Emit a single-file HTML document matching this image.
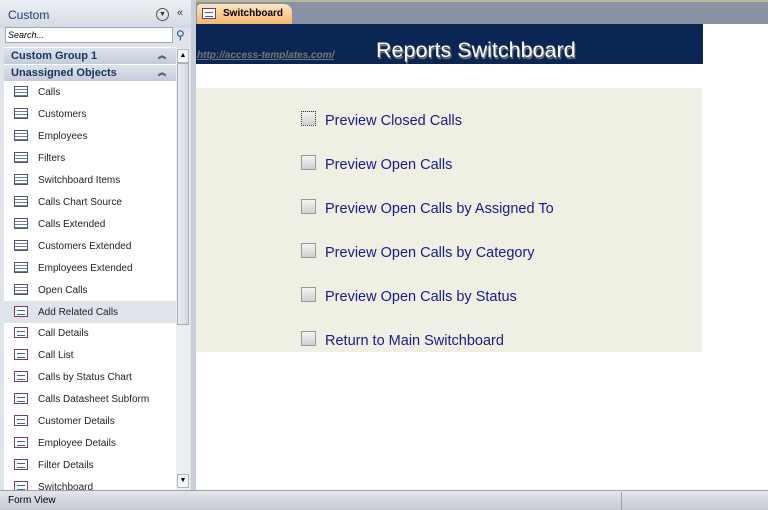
<!DOCTYPE html>
<html><head><style>
body{margin:0;width:768px;height:510px;overflow:hidden;position:relative;font-family:"Liberation Sans",sans-serif;background:#fff}
.abs{position:absolute}
#nav{left:0;top:0;width:191px;height:490px;background:#dfe3ea;border-right:1px solid #9aa3b0}
.hdr{left:0;top:0;width:191px;height:28px;background:linear-gradient(#eef1f5,#d3d9e2);}
.grp{left:4px;width:172px;height:16px;background:linear-gradient(#dde3ec,#c3ccd9);font-size:11px;font-weight:bold;color:#1c2f5e;line-height:16px;padding-left:7px;box-sizing:border-box}
.item{left:4px;width:172px;height:22px;font-size:10px;color:#222;line-height:24px;padding-left:34px;box-sizing:border-box}
.ic{position:absolute;left:10px;top:5px;width:14px;height:11px;border:1px solid #556;box-sizing:border-box;background:repeating-linear-gradient(#fff 0 2px,#6a7fa8 2px 3px)}
.fm{background:#fff;border-color:#7a3a6a}
.fm::after{content:"";position:absolute;left:2px;top:3px;width:8px;height:3px;border-top:1px solid #36a;border-bottom:1px solid #36a}
.btn{left:301px;width:15px;height:15px;background:linear-gradient(#f4f4f4,#d0d0d0);border:1px solid #999;box-sizing:border-box}
.bt{left:325px;font-size:14.5px;color:#1a1a8c;margin-top:2px}
</style></head><body>
<div id="nav" class="abs">
<div class="abs hdr"></div>
<div class="abs" style="left:8px;top:8px;font-size:12px;color:#1e3a6e">Custom</div>
<div class="abs" style="left:156px;top:8px;width:11px;height:11px;border:1px solid #555;border-radius:50%;font-size:7px;text-align:center;line-height:11px;color:#333">▼</div>
<div class="abs" style="left:177px;top:7px;font-size:11px;color:#333">«</div>
<div class="abs" style="left:5px;top:27px;width:168px;height:16px;background:#fff;border:1px solid #a0a8b5;box-sizing:border-box;font-size:9px;font-style:italic;line-height:14px;padding-left:2px">Search...</div>
<div class="abs" style="left:176px;top:28px;font-size:12px;color:#1a4f9a">⚲</div>
<div class="abs" style="left:4px;top:47px;width:172px;height:443px;background:#fff"></div>
<div class="abs grp" style="top:48px">Custom Group 1<span style="position:absolute;right:10px;font-size:8px">︽</span></div>
<div class="abs grp" style="top:65px">Unassigned Objects<span style="position:absolute;right:10px;font-size:8px">︽</span></div>
<div class="abs item" style="top:81px"><i class="ic"></i>Calls</div>
<div class="abs item" style="top:103px"><i class="ic"></i>Customers</div>
<div class="abs item" style="top:125px"><i class="ic"></i>Employees</div>
<div class="abs item" style="top:147px"><i class="ic"></i>Filters</div>
<div class="abs item" style="top:169px"><i class="ic"></i>Switchboard Items</div>
<div class="abs item" style="top:191px"><i class="ic"></i>Calls Chart Source</div>
<div class="abs item" style="top:213px"><i class="ic"></i>Calls Extended</div>
<div class="abs item" style="top:235px"><i class="ic"></i>Customers Extended</div>
<div class="abs item" style="top:257px"><i class="ic"></i>Employees Extended</div>
<div class="abs item" style="top:279px"><i class="ic"></i>Open Calls</div>
<div class="abs item" style="top:301px;background:#dfe3ea"><i class="ic fm"></i>Add Related Calls</div>
<div class="abs item" style="top:322px"><i class="ic fm"></i>Call Details</div>
<div class="abs item" style="top:344px"><i class="ic fm"></i>Call List</div>
<div class="abs item" style="top:366px"><i class="ic fm"></i>Calls by Status Chart</div>
<div class="abs item" style="top:388px"><i class="ic fm"></i>Calls Datasheet Subform</div>
<div class="abs item" style="top:410px"><i class="ic fm"></i>Customer Details</div>
<div class="abs item" style="top:432px"><i class="ic fm"></i>Employee Details</div>
<div class="abs item" style="top:454px"><i class="ic fm"></i>Filter Details</div>
<div class="abs item" style="top:476px;height:14px;overflow:hidden"><i class="ic fm"></i>Switchboard</div>
<div class="abs" style="left:176px;top:48px;width:14px;height:442px;background:#eceef2"></div>
<div class="abs" style="left:177px;top:49px;width:12px;height:14px;background:#f4f5f7;border:1px solid #b0b6c0;box-sizing:border-box;font-size:7px;text-align:center;line-height:12px">▲</div>
<div class="abs" style="left:177px;top:63px;width:12px;height:262px;background:linear-gradient(90deg,#e8eaee,#d4d8df);border:1px solid #a8aeb8;box-sizing:border-box"></div>
<div class="abs" style="left:177px;top:474px;width:12px;height:14px;background:#f4f5f7;border:1px solid #b0b6c0;box-sizing:border-box;font-size:7px;text-align:center;line-height:12px">▼</div>
</div>
<div class="abs" style="left:191px;top:0;width:5px;height:490px;background:#c8ced8"></div>
<div class="abs" style="left:196px;top:0;width:572px;height:24px;background:#8a93a3"></div>
<div class="abs" style="left:196px;top:0;width:572px;height:2px;background:#b9b99a"></div>
<div class="abs" style="left:197px;top:4px;width:95px;height:20px;background:linear-gradient(#fbe6c4,#f5b56c);border-radius:4px 8px 0 0;font-size:10px;font-weight:bold;line-height:20px;padding-left:26px;box-sizing:border-box">Switchboard</div>
<i class="abs ic fm" style="left:202px;top:8px"></i>
<div class="abs" style="left:196px;top:24px;width:507px;height:40px;background:#0b2655"></div>
<div class="abs" style="left:376px;top:38px;font-size:21.5px;color:#fff;text-shadow:1px 2px 1px #888">Reports Switchboard</div>
<div class="abs" style="left:197px;top:50px;font-size:10px;font-style:italic;font-weight:bold;color:#777;text-decoration:underline">http://access-templates.com/</div>
<div class="abs" style="left:196px;top:88px;width:506px;height:264px;background:#efefe4"></div>
<div class="abs btn" style="top:111px;border:1px dotted #335"></div><div class="abs bt" style="top:111px">Preview Closed Calls</div>
<div class="abs btn" style="top:155px"></div><div class="abs bt" style="top:155px">Preview Open Calls</div>
<div class="abs btn" style="top:199px"></div><div class="abs bt" style="top:199px">Preview Open Calls by Assigned To</div>
<div class="abs btn" style="top:243px"></div><div class="abs bt" style="top:243px">Preview Open Calls by Category</div>
<div class="abs btn" style="top:287px"></div><div class="abs bt" style="top:287px">Preview Open Calls by Status</div>
<div class="abs btn" style="top:331px"></div><div class="abs bt" style="top:331px">Return to Main Switchboard</div>
<div class="abs" style="left:0;top:490px;width:768px;height:20px;background:linear-gradient(#e3e6ea,#c5cad2);border-top:1px solid #9aa0aa;font-size:10px;line-height:19px;padding-left:8px;box-sizing:border-box">Form View</div>
<div class="abs" style="left:621px;top:492px;width:1px;height:18px;background:#9aa0aa"></div>
</body></html>
